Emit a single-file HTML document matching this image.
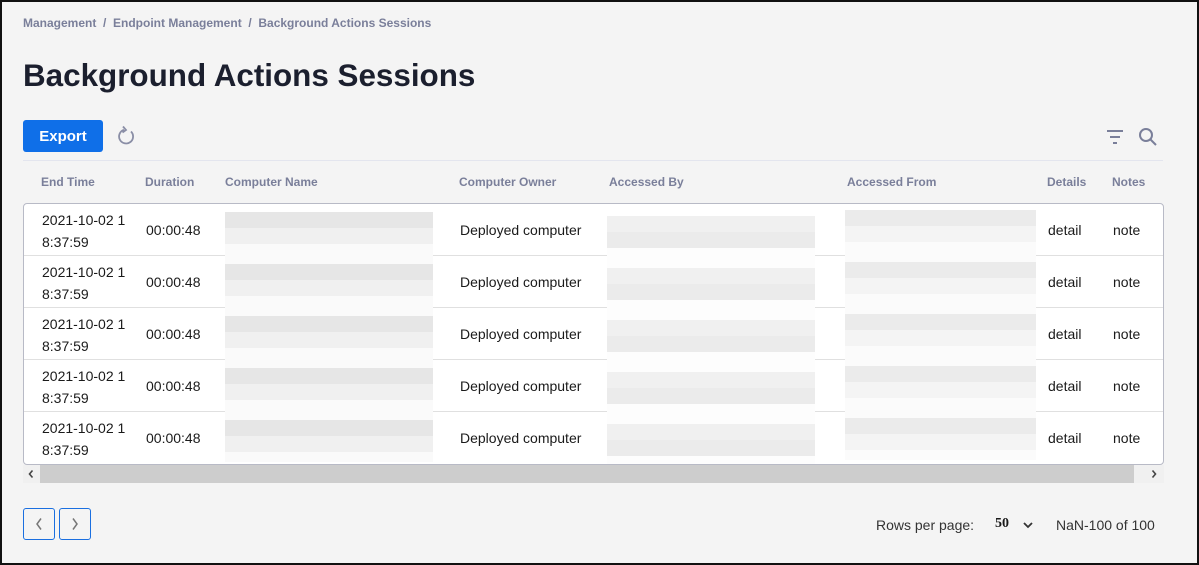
<!DOCTYPE html>
<html><head><style>
*{box-sizing:border-box;margin:0;padding:0}
html,body{width:1199px;height:565px;overflow:hidden}
body{background:#f4f4f4;border:2px solid #111;position:relative;font-family:"Liberation Sans",sans-serif;color:#1a1a1a}
.a{position:absolute}
.bc{left:21px;top:14px;font-size:12px;font-weight:bold;color:#7a7f9a;white-space:pre}
h1{position:absolute;left:21px;top:56px;font-size:31.4px;font-weight:bold;color:#1b1f2e}
.btn{left:21px;top:118px;width:80px;height:32px;background:#0f6fe8;border-radius:3px;color:#fff;font-weight:bold;font-size:15px;text-align:center;line-height:33px}
.hl{left:21px;top:158px;width:1140px;height:1px;background:#e3e5ee}
.th{top:173px;font-size:12px;font-weight:bold;color:#7a7f9a}
.card{left:21px;top:201px;width:1141px;height:262px;background:#fff;border:1px solid #b8bac6;border-radius:4px;overflow:hidden}
.row{position:absolute;left:0;width:1141px;height:52px;border-bottom:1px solid #e0e0e0;font-size:14px}
.row span{position:absolute}
.blur{position:absolute}
.sb{left:21px;top:463px;width:1141px;height:18px;background:#f0f0f0}
.thumb{left:38px;top:463px;width:1094px;height:18px;background:#cdcdcd}
.pg{top:506px;width:32px;height:32px;border:1px solid #1a6fe0;border-radius:3px;background:#f4f4f4;color:#777;text-align:center;line-height:30px;font-size:18px}
</style></head><body>
<div class="a bc">Management  /  Endpoint Management  /  Background Actions Sessions</div>
<h1>Background Actions Sessions</h1>
<div class="a btn">Export</div>
<svg class="a" style="left:114px;top:123px" width="22" height="22" viewBox="0 0 22 22"><path d="M15 6.5A7 7 0 1 1 8 4.8" fill="none" stroke="#8a8ea6" stroke-width="1.8"/><path d="M7 1.5L10 5L6.5 7.5" fill="none" stroke="#8a8ea6" stroke-width="1.8"/></svg>
<svg class="a" style="left:1103px;top:125px" width="20" height="20" viewBox="0 0 20 20"><path d="M2 4H18M5 10H15M8 16H12" stroke="#7a7f9a" stroke-width="2"/></svg>
<svg class="a" style="left:1135px;top:124px" width="22" height="22" viewBox="0 0 22 22"><circle cx="9" cy="9" r="6" fill="none" stroke="#7a7f9a" stroke-width="2"/><path d="M13.5 13.5L19 19" stroke="#7a7f9a" stroke-width="2"/></svg>
<div class="a hl"></div>
<div class="a th" style="left:39px">End Time</div>
<div class="a th" style="left:143px">Duration</div>
<div class="a th" style="left:223px">Computer Name</div>
<div class="a th" style="left:457px">Computer Owner</div>
<div class="a th" style="left:607px">Accessed By</div>
<div class="a th" style="left:845px">Accessed From</div>
<div class="a th" style="left:1045px">Details</div>
<div class="a th" style="left:1110px">Notes</div>
<div class="a card">
<div class="row" style="top:0"><span style="left:18px;top:5px;line-height:22px">2021-10-02 1<br>8:37:59</span><span style="left:122px;top:18px">00:00:48</span><span style="left:436px;top:18px">Deployed computer</span><span style="left:1024px;top:18px">detail</span><span style="left:1089px;top:18px">note</span></div>
<div class="row" style="top:52px"><span style="left:18px;top:5px;line-height:22px">2021-10-02 1<br>8:37:59</span><span style="left:122px;top:18px">00:00:48</span><span style="left:436px;top:18px">Deployed computer</span><span style="left:1024px;top:18px">detail</span><span style="left:1089px;top:18px">note</span></div>
<div class="row" style="top:104px"><span style="left:18px;top:5px;line-height:22px">2021-10-02 1<br>8:37:59</span><span style="left:122px;top:18px">00:00:48</span><span style="left:436px;top:18px">Deployed computer</span><span style="left:1024px;top:18px">detail</span><span style="left:1089px;top:18px">note</span></div>
<div class="row" style="top:156px"><span style="left:18px;top:5px;line-height:22px">2021-10-02 1<br>8:37:59</span><span style="left:122px;top:18px">00:00:48</span><span style="left:436px;top:18px">Deployed computer</span><span style="left:1024px;top:18px">detail</span><span style="left:1089px;top:18px">note</span></div>
<div class="row" style="top:208px;border-bottom:none"><span style="left:18px;top:5px;line-height:22px">2021-10-02 1<br>8:37:59</span><span style="left:122px;top:18px">00:00:48</span><span style="left:436px;top:18px">Deployed computer</span><span style="left:1024px;top:18px">detail</span><span style="left:1089px;top:18px">note</span></div>
<div class="blur" style="left:201px;top:8px;width:208px;height:250px;background:repeating-linear-gradient(180deg,#e6e6e6 0 16px,#f0f0f0 16px 32px,#fafafa 32px 52px)"></div>
<div class="blur" style="left:583px;top:12px;width:208px;height:250px;background:repeating-linear-gradient(180deg,#f0f0f0 0 16px,#ebebeb 16px 32px,#fdfdfd 32px 52px)"></div>
<div class="blur" style="left:821px;top:6px;width:191px;height:250px;background:repeating-linear-gradient(180deg,#ebebeb 0 16px,#f4f4f4 16px 32px,#fbfbfb 32px 52px)"></div>
</div>
<div class="a sb"></div><div class="a thumb"></div>
<svg class="a" style="left:24px;top:467px" width="10" height="10" viewBox="0 0 10 10"><path d="M6.5 1.5L3.5 5L6.5 8.5" fill="none" stroke="#444" stroke-width="1.6"/></svg>
<svg class="a" style="left:1147px;top:467px" width="10" height="10" viewBox="0 0 10 10"><path d="M3.5 1.5L6.5 5L3.5 8.5" fill="none" stroke="#444" stroke-width="1.6"/></svg>
<div class="a pg" style="left:21px"><svg width="12" height="14" viewBox="0 0 12 14" style="margin-top:8px"><path d="M8 1.5L4 7L8 12.5" fill="none" stroke="#777" stroke-width="1.5"/></svg></div>
<div class="a pg" style="left:57px"><svg width="12" height="14" viewBox="0 0 12 14" style="margin-top:8px"><path d="M4 1.5L8 7L4 12.5" fill="none" stroke="#777" stroke-width="1.5"/></svg></div>
<div class="a" style="left:874px;top:515px;font-size:14px;color:#333">Rows per page:</div>
<div class="a" style="left:993px;top:514px;font-size:14px;font-weight:bold;font-family:'Liberation Serif',serif">50</div>
<svg class="a" style="left:1020px;top:518px" width="12" height="10" viewBox="0 0 12 10"><path d="M2 3L6 7L10 3" fill="none" stroke="#333" stroke-width="1.8"/></svg>
<div class="a" style="left:1054px;top:515px;font-size:14px;color:#333">NaN-100 of 100</div>
</body></html>
